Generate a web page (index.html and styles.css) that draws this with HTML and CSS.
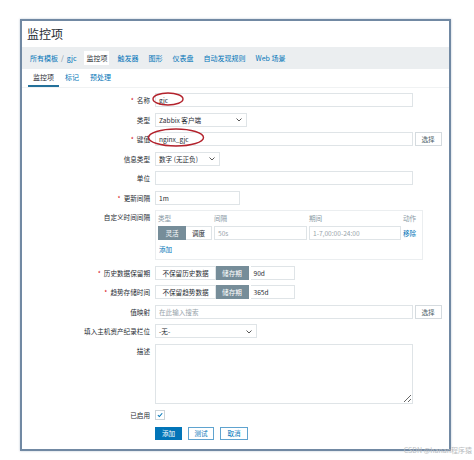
FILE: index.html
```html
<!DOCTYPE html>
<html lang="zh">
<head>
<meta charset="utf-8">
<title>监控项</title>
<link rel="stylesheet" href="styles.css">
</head>
<body>
<div class="frame">
  <div class="title">监控项</div>
  <div class="nav">
    <a class="crumb">所有模板</a><span class="sep">/</span><a class="crumb">gjc</a>
    <a class="ni first on">监控项</a>
    <a class="ni">触发器</a>
    <a class="ni">图形</a>
    <a class="ni">仪表盘</a>
    <a class="ni">自动发现规则</a>
    <a class="ni">Web 场景</a>
  </div>
  <div class="tabs">
    <span class="tab on">监控项</span>
    <span class="tab">标记</span>
    <span class="tab">预处理</span>
  </div>
  <div class="form">
    <div class="lbl req">名称</div>
    <div class="fld">
      <div class="inp w258">gjc</div>
      <svg class="ring ring1" viewBox="0 0 32 14"><ellipse cx="16" cy="7" rx="15" ry="6" fill="none" stroke="#b3222c" stroke-width="1.4"/></svg>
    </div>

    <div class="lbl">类型</div>
    <div class="fld">
      <div class="inp sel w92">Zabbix 客户端<svg class="chev" viewBox="0 0 6 4"><polyline points="0.5,0.5 3,3 5.5,0.5" fill="none" stroke="#444" stroke-width="0.9"/></svg></div>
    </div>

    <div class="lbl req">键值</div>
    <div class="fld">
      <div class="inp w258">nginx_gjc</div>
      <span class="btn-grey">选择</span>
      <svg class="ring ring2" viewBox="0 0 58 19"><ellipse cx="29" cy="9.5" rx="27.5" ry="8.5" fill="none" stroke="#b3222c" stroke-width="1.4"/></svg>
    </div>

    <div class="lbl">信息类型</div>
    <div class="fld">
      <div class="inp sel w65">数字 (无正负)<svg class="chev" viewBox="0 0 6 4"><polyline points="0.5,0.5 3,3 5.5,0.5" fill="none" stroke="#444" stroke-width="0.9"/></svg></div>
    </div>

    <div class="lbl">单位</div>
    <div class="fld"><div class="inp w258"></div></div>

    <div class="lbl req">更新间隔</div>
    <div class="fld"><div class="inp w85">1m</div></div>

    <div class="lbl">自定义时间间隔</div>
    <div class="fld">
      <div class="cbox">
        <div class="cgrid">
          <span class="hd">类型</span>
          <span class="hd">间隔</span>
          <span class="hd">期间</span>
          <span class="hd">动作</span>
          <span class="seg"><span class="on w28">灵活</span><span class="w26">调度</span></span>
          <div class="inp ph">50s</div>
          <div class="inp ph">1-7,00:00-24:00</div>
          <a class="link act">移除</a>
        </div>
        <a class="link add">添加</a>
      </div>
    </div>

    <div class="lbl req">历史数据保留期</div>
    <div class="fld">
      <span class="seg"><span class="w61">不保留历史数据</span><span class="on w33">储存期</span></span>
      <div class="inp w44 joined">90d</div>
    </div>

    <div class="lbl req">趋势存储时间</div>
    <div class="fld">
      <span class="seg"><span class="w61">不保留趋势数据</span><span class="on w33">储存期</span></span>
      <div class="inp w44 joined">365d</div>
    </div>

    <div class="lbl">值映射</div>
    <div class="fld">
      <div class="inp w258 ph">在此输入搜索</div>
      <span class="btn-grey">选择</span>
    </div>

    <div class="lbl">填入主机资产纪录栏位</div>
    <div class="fld">
      <div class="inp sel w102">-无-<svg class="chev" viewBox="0 0 6 4"><polyline points="0.5,0.5 3,3 5.5,0.5" fill="none" stroke="#444" stroke-width="0.9"/></svg></div>
    </div>

    <div class="lbl">描述</div>
    <div class="fld"><textarea class="ta"></textarea></div>

    <div class="lbl short">已启用</div>
    <div class="fld short">
      <span class="cb"><svg viewBox="0 0 10 10"><polyline points="2.3,5.2 4.2,7 7.8,2.8" fill="none" stroke="#0275b8" stroke-width="1.3"/></svg></span>
    </div>

    <div class="lbl"></div>
    <div class="fld btns">
      <span class="btn pri">添加</span>
      <span class="btn alt w26">测试</span>
      <span class="btn alt w28">取消</span>
    </div>
  </div>
</div>
<div class="wm">CSDN @hanan程序猿</div>
</body>
</html>
```
FILE: styles.css
```css
body {
  margin: 0;
  width: 474px;
  height: 460px;
  overflow: hidden;
  position: relative;
  background: #fff;
  font-family: "Noto Sans CJK SC", "Noto Sans", sans-serif;
  color: #1f2c33;
}

.frame {
  margin: 19px 0 0 20px;
  width: 431px;
  height: 432px;
  box-sizing: border-box;
  border: 2px solid #7189a3;
  box-shadow: 0 0 2px rgba(60, 90, 130, 0.35);
  background: #fff;
}

.title {
  height: 26px;
  line-height: 26px;
  padding-left: 5px;
  font-size: 12px;
  color: #1f2c33;
}

.nav {
  height: 22px;
  background: #ebeef0;
  display: flex;
  align-items: center;
  padding-left: 8px;
  font-size: 7px;
  color: #0275b8;
}

.nav a { color: #0275b8; }
.sep { color: #768d99; margin: 0 3px; }

.ni {
  padding: 3px 2px;
  margin-left: 6px;
  line-height: 8px;
}
.ni.first { margin-left: 8px; }
.ni.on { background: #fff; color: #1f2c33; }

.tabs {
  height: 18px;
  display: flex;
  padding-left: 6px;
  font-size: 7px;
  border-bottom: 1px solid #f0f2f3;
}

.tab {
  padding: 0 5px;
  line-height: 16px;
  border-bottom: 2px solid transparent;
  color: #0275b8;
  margin-right: 1px;
}
.tab.on { color: #1f2c33; border-bottom-color: #24719a; }

.form {
  display: grid;
  grid-template-columns: 128px auto;
  column-gap: 5px;
  row-gap: 5.5px;
  padding-top: 5px;
  align-items: start;
}

.lbl {
  text-align: right;
  font-size: 6.6px;
  line-height: 14px;
  color: #1f2c33;
  white-space: nowrap;
}
.req::before {
  content: "*";
  color: #d40000;
  margin-right: 3px;
}

.fld {
  display: flex;
  align-items: center;
  gap: 1.5px;
  position: relative;
}

.short { line-height: 12px; height: 12px; }

.inp {
  height: 14px;
  box-sizing: border-box;
  border: 1px solid #dfe4e7;
  background: #fff;
  font-size: 6.6px;
  line-height: 12px;
  padding: 0 3px;
  color: #1f2c33;
  position: relative;
  white-space: nowrap;
}
.ph { color: #98a4ab; }
.w258 { width: 258px; }
.w92 { width: 92px; }
.w65 { width: 65px; }
.w85 { width: 85px; }
.w102 { width: 102px; }
.w44 { width: 44px; }
.joined { border-left: none; }

.chev {
  position: absolute;
  right: 4px;
  top: 4.5px;
  width: 6px;
  height: 4px;
}

.btn-grey {
  width: 27px;
  height: 14px;
  box-sizing: border-box;
  border: 1px solid #d5dbdf;
  background: #fff;
  font-size: 6.6px;
  line-height: 12px;
  text-align: center;
  color: #4f5f69;
}

.ring {
  position: absolute;
  pointer-events: none;
}
.ring1 { left: -3px; top: -1px; width: 32px; height: 14px; }
.ring2 { left: -8px; top: -4px; width: 58px; height: 19px; }

.cbox {
  width: 268px;
  height: 50px;
  box-sizing: border-box;
  border: 1px solid #ebeef0;
  padding: 2px 2px 0 2px;
}

.cgrid {
  display: grid;
  grid-template-columns: 54px 93px 92px auto;
  column-gap: 2px;
  row-gap: 2px;
  align-items: center;
}

.hd {
  font-size: 6.6px;
  line-height: 11px;
  color: #8a9aa5;
}

.seg {
  display: flex;
  height: 14px;
}
.seg > span {
  box-sizing: border-box;
  height: 14px;
  border: 1px solid #dfe4e7;
  background: #fff;
  font-size: 6.6px;
  line-height: 12px;
  text-align: center;
  color: #1f2c33;
}
.seg > span + span { border-left: none; }
.seg > span.on {
  background: #768d99;
  border-color: #768d99;
  color: #fff;
}
.w28 { width: 28px; }
.w26 { width: 26px; }
.w61 { width: 61px; }
.w33 { width: 33px; }

.link {
  font-size: 6.6px;
  color: #0275b8;
}
.act { line-height: 14px; }
.add {
  display: block;
  margin-top: 3px;
  line-height: 12px;
  padding-left: 1px;
}

.ta {
  display: block;
  width: 258px;
  height: 60px;
  box-sizing: border-box;
  border: 1px solid #dfe4e7;
  margin: 0;
  padding: 2px;
  font: inherit;
  font-size: 6.6px;
}

.cb {
  width: 10px;
  height: 10px;
  box-sizing: border-box;
  border: 1px solid #cbd3d8;
  background: #fff;
  display: block;
}
.cb svg { display: block; width: 8px; height: 8px; }

.btns { gap: 6px; }
.btn {
  height: 13px;
  box-sizing: border-box;
  font-size: 6.6px;
  line-height: 11px;
  text-align: center;
  border: 1px solid #0275b8;
}
.pri { width: 27px; background: #0275b8; color: #fff; }
.alt { background: #fff; color: #0275b8; border-color: #5fa3cf; }

.wm {
  position: absolute;
  right: 2px;
  top: 445px;
  font-size: 7px;
  line-height: 10px;
  color: #b9bcc0;
}
```
